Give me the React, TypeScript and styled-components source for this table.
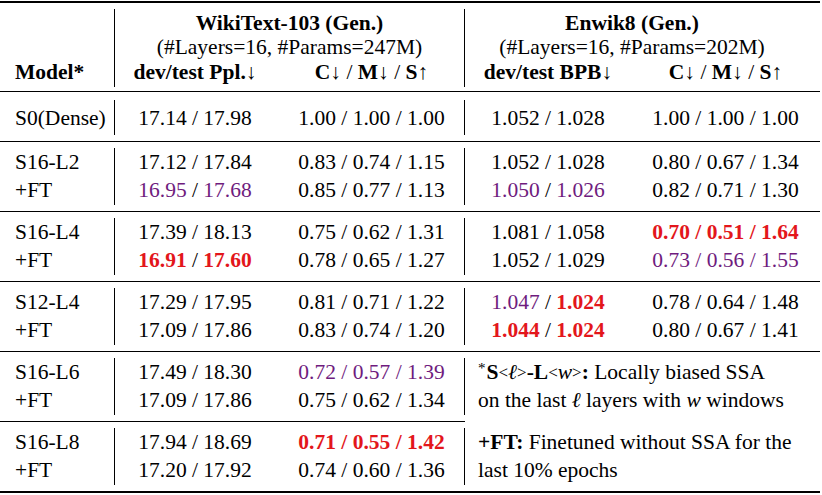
import React from 'react';
import styled, { createGlobalStyle } from 'styled-components';

const Global = createGlobalStyle`
  html, body { margin: 0; padding: 0; background: #ffffff; }
  body {
    font-family: "Liberation Serif", "Times New Roman", "DejaVu Serif", serif;
    color: #000000;
  }
  * { box-sizing: border-box; }
`;

const Table = styled.div`
  width: 820px;
  padding-top: 1px;
  display: flex;
  flex-direction: column;
  font-size: 21.5px;
  line-height: 1;
`;

const Rule = styled.div<{ $thick?: boolean; $partial?: boolean; $above?: number; $below?: number }>`
  height: ${p => (p.$thick ? 2 : 1)}px;
  background: #000000;
  width: ${p => (p.$partial ? '465px' : '100%')};
  margin-top: ${p => p.$above ?? 6}px;
  margin-bottom: ${p => p.$below ?? 6}px;
`;

const Group = styled.div`
  display: grid;
  grid-template-columns: 115px 350px 355px;
`;

const ModelColumn = styled.div<{ $padTop: number; $padBottom: number }>`
  display: flex;
  flex-direction: column;
  justify-content: flex-end;
  border-right: 1px solid #000000;
  padding: ${p => p.$padTop}px 0 ${p => p.$padBottom}px 15px;
`;

const DataPanel = styled.div<{ $padTop: number; $padBottom: number; $divider?: boolean }>`
  display: flex;
  flex-direction: column;
  justify-content: flex-end;
  border-right: ${p => (p.$divider ? '1px solid #000000' : 'none')};
  padding: ${p => p.$padTop}px 0 ${p => p.$padBottom}px 0;
`;

const Line = styled.div<{ $h: number }>`
  height: ${p => p.$h}px;
  display: flex;
  align-items: center;
  white-space: nowrap;
`;

const TitleLine = styled.div<{ $h: number; $shift?: number; $bold?: boolean }>`
  height: ${p => p.$h}px;
  display: flex;
  align-items: center;
  justify-content: center;
  padding-right: ${p => p.$shift ?? 0}px;
  font-weight: ${p => (p.$bold ? 700 : 400)};
  white-space: nowrap;
`;

const CellRow = styled.div<{ $h: number; $cols: string }>`
  height: ${p => p.$h}px;
  display: grid;
  grid-template-columns: ${p => p.$cols};
  align-items: center;
  white-space: nowrap;
`;

const Cell = styled.div<{ $offset?: number }>`
  text-align: center;
  padding-left: ${p => p.$offset ?? 0}px;
`;

const HeadLabel = styled.span`
  font-weight: 700;
`;

const Val = styled.span<{ $tone?: 'purple' | 'red' }>`
  color: ${p => (p.$tone === 'purple' ? '#6f1c7e' : p.$tone === 'red' ? '#e3161b' : '#000000')};
  font-weight: ${p => (p.$tone === 'red' ? 700 : 400)};
`;

const NoteLine = styled.div`
  height: 28.5px;
  display: flex;
  align-items: center;
  padding-left: 13px;
  white-space: nowrap;
`;

const Star = styled.span`
  font-size: 15px;
  position: relative;
  top: -4px;
  margin-right: 1px;
`;

const Angle = styled.span`
  font-size: 17px;
`;

type Tone = 'purple' | 'red' | undefined;

const Pair = ({ a, b, ta, tb }: { a: string; b: string; ta?: Tone; tb?: Tone }) => (
  <>
    <Val $tone={ta}>{a}</Val> / <Val $tone={tb}>{b}</Val>
  </>
);

const Triple = ({ v, tone }: { v: [string, string, string]; tone?: Tone }) => (
  <Val $tone={tone}>{`${v[0]} / ${v[1]} / ${v[2]}`}</Val>
);

type Row = {
  model: string;
  ppl: [string, string, Tone?, Tone?];
  cms: [string, string, string, Tone?];
  bpb?: [string, string, Tone?, Tone?];
  cms2?: [string, string, string, Tone?];
  note?: React.ReactNode;
};

const ROW_H = 28.5;
const LEFT_COLS = '160px 189px';
const RIGHT_COLS = '166px 189px';

const groups: { rows: Row[]; partialBelow?: boolean }[] = [
  {
    rows: [
      { model: 'S16-L2', ppl: ['17.12', '17.84'], cms: ['0.83', '0.74', '1.15'], bpb: ['1.052', '1.028'], cms2: ['0.80', '0.67', '1.34'] },
      { model: '+FT', ppl: ['16.95', '17.68', 'purple', 'purple'], cms: ['0.85', '0.77', '1.13'], bpb: ['1.050', '1.026', 'purple', 'purple'], cms2: ['0.82', '0.71', '1.30'] },
    ],
  },
  {
    rows: [
      { model: 'S16-L4', ppl: ['17.39', '18.13'], cms: ['0.75', '0.62', '1.31'], bpb: ['1.081', '1.058'], cms2: ['0.70', '0.51', '1.64', 'red'] },
      { model: '+FT', ppl: ['16.91', '17.60', 'red', 'red'], cms: ['0.78', '0.65', '1.27'], bpb: ['1.052', '1.029'], cms2: ['0.73', '0.56', '1.55', 'purple'] },
    ],
  },
  {
    rows: [
      { model: 'S12-L4', ppl: ['17.29', '17.95'], cms: ['0.81', '0.71', '1.22'], bpb: ['1.047', '1.024', 'purple', 'red'], cms2: ['0.78', '0.64', '1.48'] },
      { model: '+FT', ppl: ['17.09', '17.86'], cms: ['0.83', '0.74', '1.20'], bpb: ['1.044', '1.024', 'red', 'red'], cms2: ['0.80', '0.67', '1.41'] },
    ],
  },
  {
    partialBelow: true,
    rows: [
      {
        model: 'S16-L6', ppl: ['17.49', '18.30'], cms: ['0.72', '0.57', '1.39', 'purple'],
        note: (
          <>
            <Star>*</Star>
            <b>S</b>
            <Angle>&lt;</Angle>
            <i>ℓ</i>
            <Angle>&gt;</Angle>
            <b>-L</b>
            <Angle>&lt;</Angle>
            <i>w</i>
            <Angle>&gt;</Angle>
            <b>:</b>&nbsp;Locally biased SSA
          </>
        ),
      },
      {
        model: '+FT', ppl: ['17.09', '17.86'], cms: ['0.75', '0.62', '1.34'],
        note: (
          <>
            on the last&nbsp;<i>ℓ</i>&nbsp;layers with&nbsp;<i>w</i>&nbsp;windows
          </>
        ),
      },
    ],
  },
  {
    rows: [
      {
        model: 'S16-L8', ppl: ['17.94', '18.69'], cms: ['0.71', '0.55', '1.42', 'red'],
        note: (
          <>
            <b>+FT:</b>&nbsp;Finetuned without SSA for the
          </>
        ),
      },
      { model: '+FT', ppl: ['17.20', '17.92'], cms: ['0.74', '0.60', '1.36'], note: <>last 10% epochs</> },
    ],
  },
];

const LeftCells = ({ r }: { r: Row }) => (
  <CellRow $h={ROW_H} $cols={LEFT_COLS}>
    <Cell>
      <Pair a={r.ppl[0]} b={r.ppl[1]} ta={r.ppl[2]} tb={r.ppl[3]} />
    </Cell>
    <Cell $offset={4}>
      <Triple v={[r.cms[0], r.cms[1], r.cms[2]]} tone={r.cms[3]} />
    </Cell>
  </CellRow>
);

const RightCells = ({ r }: { r: Row }) =>
  r.note ? (
    <NoteLine>{r.note}</NoteLine>
  ) : (
    <CellRow $h={ROW_H} $cols={RIGHT_COLS}>
      <Cell>
        <Pair a={r.bpb![0]} b={r.bpb![1]} ta={r.bpb![2]} tb={r.bpb![3]} />
      </Cell>
      <Cell>
        <Triple v={[r.cms2![0], r.cms2![1], r.cms2![2]]} tone={r.cms2![3]} />
      </Cell>
    </CellRow>
  );

const MetricHead = () => (
  <>
    <HeadLabel>C</HeadLabel>↓ / <HeadLabel>M</HeadLabel>↓ / <HeadLabel>S</HeadLabel>↑
  </>
);

export default function App() {
  return (
    <>
      <Global />
      <Table>
        <Rule $thick $above={0} $below={6} />
        <Group>
          <ModelColumn $padTop={3} $padBottom={1}>
            <Line $h={26}>
              <HeadLabel>Model*</HeadLabel>
            </Line>
          </ModelColumn>
          <DataPanel $divider $padTop={3} $padBottom={1}>
            <TitleLine $h={24} $bold>WikiText-103 (Gen.)</TitleLine>
            <TitleLine $h={24}>(#Layers=16, #Params=247M)</TitleLine>
            <CellRow $h={26} $cols={LEFT_COLS}>
              <Cell>
                <HeadLabel>dev/test Ppl.</HeadLabel>↓
              </Cell>
              <Cell $offset={4}>
                <MetricHead />
              </Cell>
            </CellRow>
          </DataPanel>
          <DataPanel $padTop={3} $padBottom={1}>
            <TitleLine $h={24} $shift={21} $bold>Enwik8 (Gen.)</TitleLine>
            <TitleLine $h={24} $shift={21}>(#Layers=16, #Params=202M)</TitleLine>
            <CellRow $h={26} $cols={RIGHT_COLS}>
              <Cell>
                <HeadLabel>dev/test BPB</HeadLabel>↓
              </Cell>
              <Cell>
                <MetricHead />
              </Cell>
            </CellRow>
          </DataPanel>
        </Group>
        <Rule $above={4} $below={8} />
        <Group>
          <ModelColumn $padTop={5} $padBottom={2}>
            <Line $h={28}>S0(Dense)</Line>
          </ModelColumn>
          <DataPanel $divider $padTop={5} $padBottom={2}>
            <CellRow $h={28} $cols={LEFT_COLS}>
              <Cell>17.14 / 17.98</Cell>
              <Cell $offset={4}>1.00 / 1.00 / 1.00</Cell>
            </CellRow>
          </DataPanel>
          <DataPanel $padTop={5} $padBottom={2}>
            <CellRow $h={28} $cols={RIGHT_COLS}>
              <Cell>1.052 / 1.028</Cell>
              <Cell>1.00 / 1.00 / 1.00</Cell>
            </CellRow>
          </DataPanel>
        </Group>
        {groups.map((g, gi) => (
          <React.Fragment key={gi}>
            <Rule $partial={groups[gi - 1]?.partialBelow} />
            <Group>
              <ModelColumn $padTop={0} $padBottom={0}>
                {g.rows.map((r, ri) => (
                  <Line key={ri} $h={ROW_H}>{r.model}</Line>
                ))}
              </ModelColumn>
              <DataPanel $divider $padTop={0} $padBottom={0}>
                {g.rows.map((r, ri) => (
                  <LeftCells key={ri} r={r} />
                ))}
              </DataPanel>
              <DataPanel $padTop={0} $padBottom={0}>
                {g.rows.map((r, ri) => (
                  <RightCells key={ri} r={r} />
                ))}
              </DataPanel>
            </Group>
          </React.Fragment>
        ))}
        <Rule $thick $above={6} $below={0} />
      </Table>
    </>
  );
}
